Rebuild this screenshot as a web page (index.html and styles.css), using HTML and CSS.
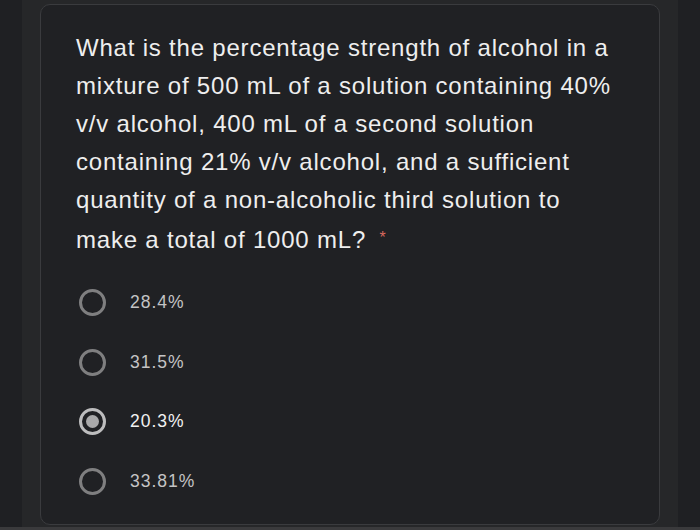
FILE: index.html
```html
<!DOCTYPE html>
<html>
<head>
<meta charset="utf-8">
<link rel="stylesheet" href="styles.css">
</head>
<body>
<div class="strip">
  <div class="card">
    <p class="question">What is the percentage strength of alcohol in a<br>mixture of 500 mL of a solution containing 40%<br>v/v alcohol, 400 mL of a second solution<br>containing 21% v/v alcohol, and a sufficient<br>quantity of a non-alcoholic third solution to<br>make a total of 1000 mL? <span class="req">*</span></p>
    <div class="options">
      <div class="opt"><span class="radio"></span><span class="label">28.4%</span></div>
      <div class="opt"><span class="radio"></span><span class="label">31.5%</span></div>
      <div class="opt selected"><span class="radio"><span class="dot"></span></span><span class="label">20.3%</span></div>
      <div class="opt"><span class="radio"></span><span class="label">33.81%</span></div>
    </div>
  </div>
</div>
<div class="bottom"></div>
</body>
</html>
```
FILE: styles.css
```css
html, body {
  margin: 0;
  padding: 0;
  background: #1f2023;
  width: 700px;
  height: 530px;
  overflow: hidden;
  font-family: "Liberation Sans", Arial, sans-serif;
}
.strip {
  margin-left: 22px;
  width: 620px;
  padding: 4px 18px 2px 18px;
  background: #262729;
  height: 521px;
}
.card {
  box-sizing: border-box;
  height: 521px;
  background: #202124;
  border: 1px solid #3a3b3e;
  border-radius: 10px;
  padding: 24px 10px 0 35px;
}
.question {
  margin: 0;
  color: #eeeeee;
  font-size: 24px;
  letter-spacing: 0.8px;
  line-height: 38px;
  white-space: nowrap;
}
.req {
  color: #d9695e;
  font-size: 16px;
  vertical-align: 5px;
  margin-left: 6px;
}
.options {
  margin-top: 14px;
  display: flex;
  flex-direction: column;
}
.opt {
  height: 59.5px;
  display: flex;
  align-items: center;
}
.radio {
  box-sizing: border-box;
  width: 27px;
  height: 27px;
  border: 3px solid #7f7f80;
  border-radius: 50%;
  margin-left: 3px;
  display: flex;
  align-items: center;
  justify-content: center;
}
.selected .radio {
  border-color: #bdbdbe;
}
.dot {
  width: 13px;
  height: 13px;
  border-radius: 50%;
  background: #a9a9aa;
}
.label {
  margin-left: 24px;
  color: #c4c4c5;
  font-size: 17.5px;
  letter-spacing: 1px;
}
.selected .label {
  color: #f2f2f2;
}
.bottom {
  height: 3px;
  background: #3a3a3c;
}
```
